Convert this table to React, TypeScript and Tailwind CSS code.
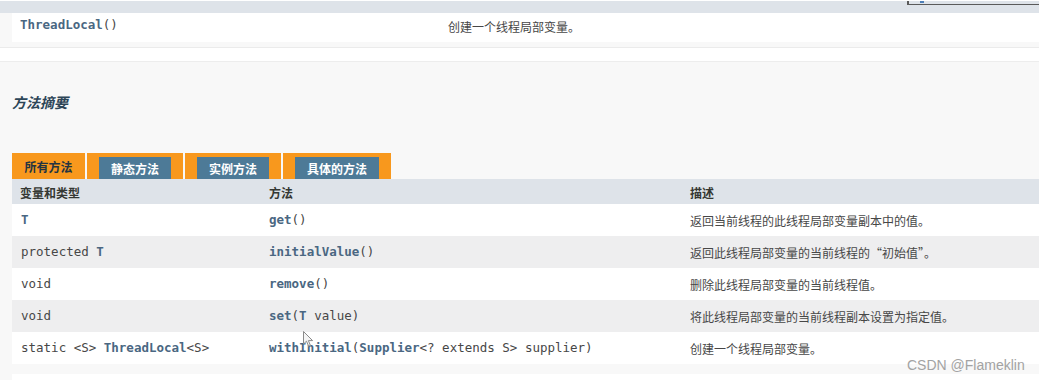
import React from "react";

type Part = { t: string; link?: boolean };

interface Row {
  type: Part[];
  method: Part[];
  desc: string;
}

const rows: Row[] = [
  { type: [{ t: "T", link: true }], method: [{ t: "get", link: true }, { t: "()" }], desc: "返回当前线程的此线程局部变量副本中的值。" },
  {
    type: [{ t: "protected " }, { t: "T", link: true }],
    method: [{ t: "initialValue", link: true }, { t: "()" }],
    desc: "返回此线程局部变量的当前线程的“初始值”。",
  },
  { type: [{ t: "void" }], method: [{ t: "remove", link: true }, { t: "()" }], desc: "删除此线程局部变量的当前线程值。" },
  {
    type: [{ t: "void" }],
    method: [{ t: "set", link: true }, { t: "(" }, { t: "T", link: true }, { t: "\u00a0value)" }],
    desc: "将此线程局部变量的当前线程副本设置为指定值。",
  },
  {
    type: [{ t: "static <S> " }, { t: "ThreadLocal", link: true }, { t: "<S>" }],
    method: [
      { t: "withInitial", link: true },
      { t: "(" },
      { t: "Supplier", link: true },
      { t: "<? extends S> supplier)" },
    ],
    desc: "创建一个线程局部变量。",
  },
];

function Code({ parts }: { parts: Part[] }) {
  return (
    <code className="block font-['DejaVu_Sans_Mono',monospace] text-[12.5px] leading-4 whitespace-pre text-[#474747]">
      {parts.map((p, i) =>
        p.link ? (
          <span key={i} className="font-bold text-[#4a6782]">
            {p.t}
          </span>
        ) : (
          <span key={i}>{p.t}</span>
        )
      )}
    </code>
  );
}

const tabs = ["静态方法", "实例方法", "具体的方法"];

export default function App() {
  return (
    <div className="relative w-[1039px] h-[380px] overflow-hidden bg-white font-['Noto_Sans_CJK_SC',sans-serif]">
      {/* header band with search box edge */}
      <div className="h-[13px] bg-[#dee3e9] border-t border-white flex justify-end">
        <div className="w-[132px] h-[4px] border-l-2 border-b border-[#5a5a5a] flex">
          <span className="ml-[11px] w-[4px] h-[2px] bg-[#4d7fb8]" />
        </div>
      </div>

      {/* constructor summary tail */}
      <div className="bg-[#f8f8f8] pl-3 pb-[5px] border-b border-[#ebebeb]">
        <div className="h-[29px] bg-white flex">
          <div className="w-[428px] pl-2 pt-[4px]">
            <Code parts={[{ t: "ThreadLocal", link: true }, { t: "()" }]} />
          </div>
          <div className="pl-2 pt-[4px] text-[12px] leading-5 text-[#474747]">创建一个线程局部变量。</div>
        </div>
      </div>

      <div className="h-[13px]" />

      {/* method summary */}
      <div className="bg-[#f8f8f8] border-t border-[#ededed] pl-3">
        <h3 className="pt-[30px] text-[14px] leading-5 font-bold italic text-[#2c4557]">方法摘要</h3>

        <div className="mt-[41px] flex gap-[2px] h-[26px]">
          <div className="w-[73px] bg-[#f8981d] flex items-center justify-center pt-[2px] text-[12px] font-bold text-[#253441]">
            所有方法
          </div>
          {tabs.map((t) => (
            <div key={t} className="bg-[#f8981d] px-[12px] pt-[4px] flex">
              <div className="h-full px-[12px] bg-[#4d7a97] flex items-center pt-[2px] text-[12px] font-bold text-white">
                {t}
              </div>
            </div>
          ))}
        </div>

        <div className="grid grid-cols-[249px_421px_1fr] h-[25px] bg-[#dee3e9] items-center pt-[2px] text-[12px] font-bold text-[#353833]">
          <div className="pl-2">变量和类型</div>
          <div className="pl-2">方法</div>
          <div className="pl-2">描述</div>
        </div>

        {rows.map((r, i) => (
          <div
            key={i}
            className={`grid grid-cols-[249px_421px_1fr] h-8 items-center ${i % 2 === 0 ? "bg-white" : "bg-[#eeeeef]"}`}
          >
            <div className="pl-[9px]">
              <Code parts={r.type} />
            </div>
            <div className="pl-[8px]">
              <Code parts={r.method} />
            </div>
            <div className="pl-2 pt-[2px] text-[12px] leading-5 text-[#474747]">{r.desc}</div>
          </div>
        ))}

        <div className="h-[10px]" />
        <div className="h-[6px] bg-white" />
      </div>

      {/* mouse cursor */}
      <svg className="absolute left-[303px] top-[331px]" width="12" height="17" viewBox="0 0 12 17">
        <path d="M0.5 0.5 L0.5 13 L3.5 10.2 L5.6 15.2 L7.4 14.4 L5.4 9.6 L9.6 9.6 Z" fill="#f4f4f4" stroke="#8a8a8a" strokeWidth="1" />
      </svg>

      {/* watermark */}
      <div className="absolute left-[907px] top-[355px] font-['Liberation_Sans',sans-serif] text-[14px] leading-5 text-[#a3a3a3]">
        CSDN @Flameklin
      </div>
    </div>
  );
}
